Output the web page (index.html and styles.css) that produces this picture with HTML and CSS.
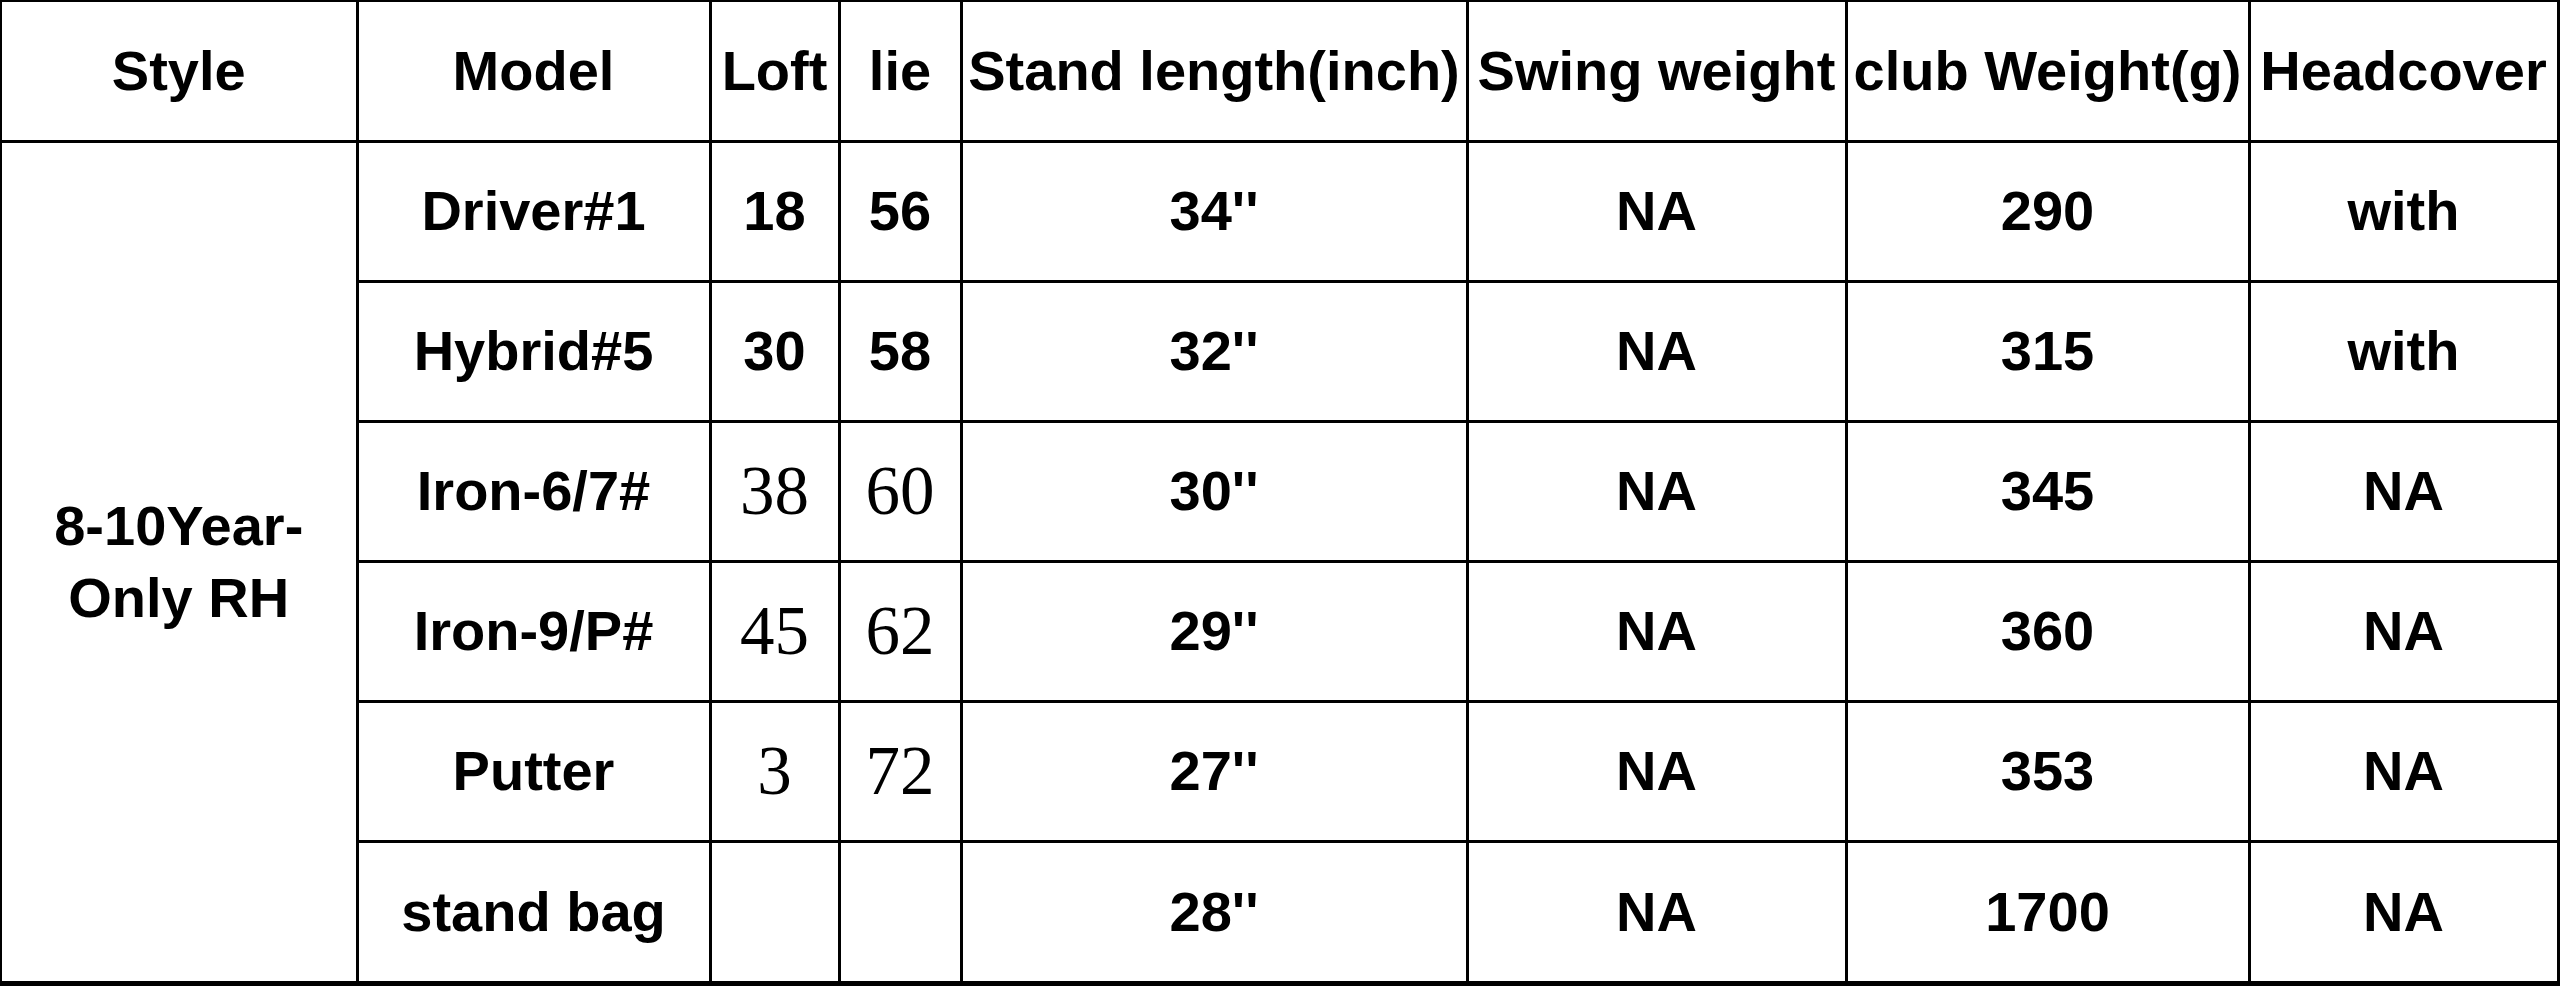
FILE: index.html
```html
<!DOCTYPE html>
<html lang="en">
<head>
<meta charset="utf-8">
<title>Golf Club Set Specifications</title>
<link rel="stylesheet" href="styles.css">
</head>
<body>
<table class="spec">
  <colgroup>
    <col class="c-style">
    <col class="c-model">
    <col class="c-loft">
    <col class="c-lie">
    <col class="c-length">
    <col class="c-swing">
    <col class="c-weight">
    <col class="c-cover">
  </colgroup>
  <thead>
    <tr class="head-row">
      <th>Style</th>
      <th>Model</th>
      <th>Loft</th>
      <th>lie</th>
      <th>Stand length(inch)</th>
      <th>Swing weight</th>
      <th>club Weight(g)</th>
      <th>Headcover</th>
    </tr>
  </thead>
  <tbody>
    <tr class="row">
      <td class="style-cell" rowspan="6">8-10Year-<br>Only RH</td>
      <td>Driver#1</td>
      <td>18</td>
      <td>56</td>
      <td>34''</td>
      <td>NA</td>
      <td>290</td>
      <td>with</td>
    </tr>
    <tr class="row">
      <td>Hybrid#5</td>
      <td>30</td>
      <td>58</td>
      <td>32''</td>
      <td>NA</td>
      <td>315</td>
      <td>with</td>
    </tr>
    <tr class="row">
      <td>Iron-6/7#</td>
      <td class="serif">38</td>
      <td class="serif">60</td>
      <td>30''</td>
      <td>NA</td>
      <td>345</td>
      <td>NA</td>
    </tr>
    <tr class="row">
      <td>Iron-9/P#</td>
      <td class="serif">45</td>
      <td class="serif">62</td>
      <td>29''</td>
      <td>NA</td>
      <td>360</td>
      <td>NA</td>
    </tr>
    <tr class="row">
      <td>Putter</td>
      <td class="serif">3</td>
      <td class="serif">72</td>
      <td>27''</td>
      <td>NA</td>
      <td>353</td>
      <td>NA</td>
    </tr>
    <tr class="row last-row">
      <td>stand bag</td>
      <td></td>
      <td></td>
      <td>28''</td>
      <td>NA</td>
      <td>1700</td>
      <td>NA</td>
    </tr>
  </tbody>
</table>
</body>
</html>
```

FILE: styles.css
```css
html, body {
  margin: 0;
  padding: 0;
  background: #ffffff;
}

body {
  font-family: "Liberation Sans", Arial, sans-serif;
  color: #000000;
}

.spec {
  border-collapse: collapse;
  table-layout: fixed;
  width: 2559px;
  font-weight: bold;
}

.c-style  { width: 356px; }
.c-model  { width: 353px; }
.c-loft   { width: 129px; }
.c-lie    { width: 122px; }
.c-length { width: 506px; }
.c-swing  { width: 379px; }
.c-weight { width: 403px; }
.c-cover  { width: 309px; }

.spec th,
.spec td {
  padding: 0;
  text-align: center;
  vertical-align: middle;
  white-space: nowrap;
  border-left: 3px solid #000;
  border-right: 3px solid #000;
  border-top: 3px solid #000;
  border-bottom: 3px solid #000;
  font-size: 56px;
  line-height: 1;
}

.spec th {
  font-weight: bold;
  border-top-width: 2px;
}

.spec th:first-child,
.spec td.style-cell {
  border-left-width: 2px;
}

.head-row { height: 140px; }
.row { height: 140px; }
.last-row { height: 142px; }
.last-row td { border-bottom-width: 5px; }

.style-cell {
  line-height: 72px !important;
  border-bottom-width: 5px !important;
}

.serif {
  font-family: "Liberation Serif", "Times New Roman", serif;
  font-weight: normal;
  font-size: 69px !important;
}
```
